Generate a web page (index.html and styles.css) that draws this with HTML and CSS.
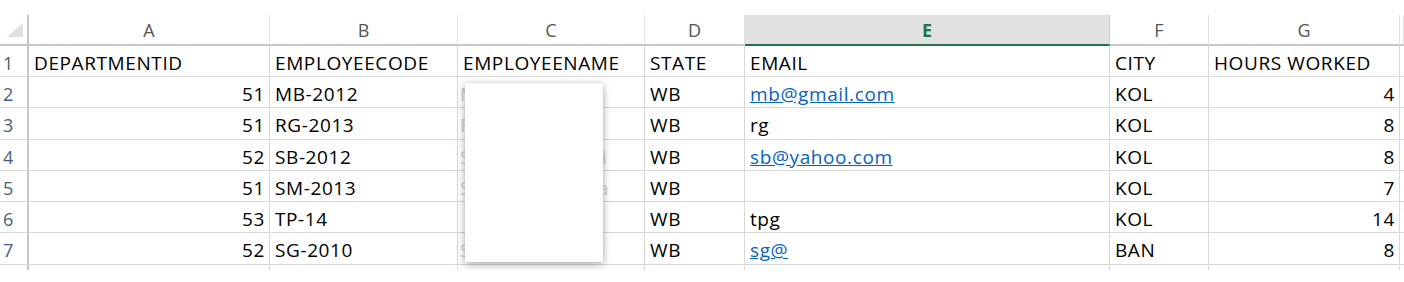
FILE: index.html
```html
<!DOCTYPE html>
<html>
<head>
<meta charset="utf-8">
<link rel="stylesheet" href="styles.css">
</head>
<body>
<div class="sheet">
  <div class="grid">
    <div class="corner"><div class="tri"></div></div>
    <div class="ch">A</div>
    <div class="ch">B</div>
    <div class="ch">C</div>
    <div class="ch">D</div>
    <div class="ch sel">E</div>
    <div class="ch">F</div>
    <div class="ch">G</div>
    <div class="ch last"></div>

    <div class="rh">1</div>
    <div class="c">DEPARTMENTID</div>
    <div class="c">EMPLOYEECODE</div>
    <div class="c">EMPLOYEENAME</div>
    <div class="c">STATE</div>
    <div class="c">EMAIL</div>
    <div class="c">CITY</div>
    <div class="c">HOURS WORKED</div>
    <div class="c last"></div>

    <div class="rh">2</div>
    <div class="c num">51</div>
    <div class="c">MB-2012</div>
    <div class="c"><span class="nm">M</span></div>
    <div class="c">WB</div>
    <div class="c"><a class="lnk">mb@gmail.com</a></div>
    <div class="c">KOL</div>
    <div class="c num">4</div>
    <div class="c last"></div>

    <div class="rh">3</div>
    <div class="c num">51</div>
    <div class="c">RG-2013</div>
    <div class="c"><span class="nm">R</span></div>
    <div class="c">WB</div>
    <div class="c">rg</div>
    <div class="c">KOL</div>
    <div class="c num">8</div>
    <div class="c last"></div>

    <div class="rh">4</div>
    <div class="c num">52</div>
    <div class="c">SB-2012</div>
    <div class="c"><span class="nm">S</span><span class="nm tail">i</span></div>
    <div class="c">WB</div>
    <div class="c"><a class="lnk">sb@yahoo.com</a></div>
    <div class="c">KOL</div>
    <div class="c num">8</div>
    <div class="c last"></div>

    <div class="rh">5</div>
    <div class="c num">51</div>
    <div class="c">SM-2013</div>
    <div class="c"><span class="nm">S</span><span class="nm tail2">a</span></div>
    <div class="c">WB</div>
    <div class="c"></div>
    <div class="c">KOL</div>
    <div class="c num">7</div>
    <div class="c last"></div>

    <div class="rh">6</div>
    <div class="c num">53</div>
    <div class="c">TP-14</div>
    <div class="c"></div>
    <div class="c">WB</div>
    <div class="c">tpg</div>
    <div class="c">KOL</div>
    <div class="c num">14</div>
    <div class="c last"></div>

    <div class="rh">7</div>
    <div class="c num">52</div>
    <div class="c">SG-2010</div>
    <div class="c"><span class="nm">S</span></div>
    <div class="c">WB</div>
    <div class="c"><a class="lnk">sg@</a></div>
    <div class="c">BAN</div>
    <div class="c num">8</div>
    <div class="c last"></div>

    <div class="rh stub"></div>
    <div class="c stub"></div>
    <div class="c stub"></div>
    <div class="c stub"></div>
    <div class="c stub"></div>
    <div class="c stub"></div>
    <div class="c stub"></div>
    <div class="c stub"></div>
    <div class="c stub last"></div>
  </div>
  <div class="cover"></div>
</div>
</body>
</html>
```

FILE: styles.css
```css
html, body {
  margin: 0;
  padding: 0;
  background: #ffffff;
}
.sheet {
  position: relative;
  padding-top: 15px;
  font-family: "Open Sans", Lato, sans-serif;
  font-size: 19px;
  font-weight: 500;
  letter-spacing: 0.6px;
  color: #000000;
}
.grid {
  display: grid;
  grid-template-columns: 29px 241px 188px 187px 100px 365px 99px 191px 4px;
  grid-template-rows: 31px 31px 31px 32px 31px 31px 31px 32px 5px;
}
.grid > div {
  box-sizing: border-box;
  border-right: 1px solid #d8d8d8;
  border-bottom: 1px solid #d8d8d8;
  display: flex;
  align-items: center;
  white-space: nowrap;
  overflow: hidden;
}
.corner {
  justify-content: flex-end;
  align-items: flex-end !important;
  padding: 0 4px 7px 0;
  border-right: 2px solid #c6c6c6 !important;
  border-bottom: 2px solid #c6c6c6 !important;
}
.tri {
  width: 16px;
  height: 14px;
  background: #dfdfdf;
  clip-path: polygon(100% 0, 100% 100%, 0 100%);
}
.ch {
  justify-content: center;
  color: #555555;
  font-size: 18px;
  font-weight: 400;
  letter-spacing: 0;
  border-right: 1px solid #e1e1e1 !important;
  border-bottom: 2px solid #c6c6c6 !important;
  padding-top: 1px;
}
.ch.sel {
  background: #e1e1e1;
  color: #217346;
  font-weight: bold;
  border-bottom: 2px solid #217346 !important;
  border-right-color: #d0d0d0 !important;
}
.rh {
  color: #46607c;
  font-size: 18px;
  font-weight: 400;
  letter-spacing: 0;
  padding-left: 3px;
  padding-top: 3px;
  border-right: 2px solid #c6c6c6 !important;
}
.c {
  padding: 3px 4px 0 5px;
}
.num {
  justify-content: flex-end;
}
.lnk {
  color: #0563c1;
  text-decoration: underline;
}
.nm {
  color: #d9cfc2;
  margin-left: -3px;
}
.tail {
  margin-left: 131px;
}
.tail2 {
  margin-left: 127px;
}
.stub {
  border-bottom: none !important;
}
.cover {
  position: absolute;
  left: 465px;
  top: 83px;
  width: 138px;
  height: 179px;
  background: #ffffff;
  box-shadow: 0 3px 9px rgba(0, 0, 0, 0.28), 0 0 4px rgba(0, 0, 0, 0.12);
}
```
